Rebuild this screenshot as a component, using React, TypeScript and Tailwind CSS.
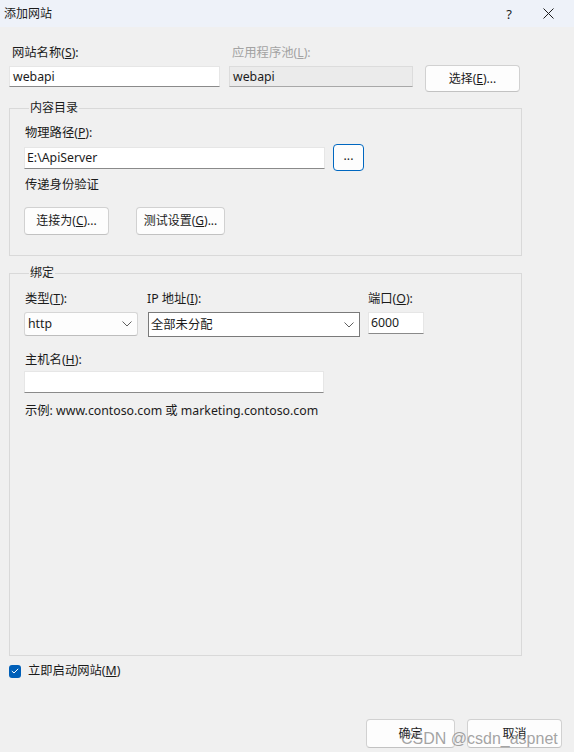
import React from "react";

const font = { fontFamily: '"Noto Sans", "Noto Sans CJK SC", sans-serif' };

function Chevron() {
  return (
    <svg width="10" height="6" viewBox="0 0 10 6" fill="none">
      <path d="M0.5 0.5 L5 5 L9.5 0.5" stroke="#5f5f5f" strokeWidth="1" />
    </svg>
  );
}

function Btn({ children, className = "" }: { children: React.ReactNode; className?: string }) {
  return (
    <div
      className={`flex items-center justify-center rounded-[4px] border border-[#d1d1d1] border-b-[#c2c2c2] bg-[#fdfdfd] text-[12px] text-[#1b1b1b] ${className}`}
    >
      {children}
    </div>
  );
}

export default function App() {
  return (
    <div className="relative h-[752px] w-[574px] overflow-hidden bg-[#f0f0f0] text-[12.3px] leading-[16px] text-[#1b1b1b]" style={font}>
      {/* title bar */}
      <div className="flex h-[27px] items-center bg-[#eef2f9]">
        <span className="ml-[4px] text-[12px]">添加网站</span>
        <span className="ml-auto mr-[31px] text-[13px]">?</span>
        <svg className="mr-[20px]" width="11" height="11" viewBox="0 0 11 11">
          <path d="M0.5 0.5 L10.5 10.5 M10.5 0.5 L0.5 10.5" stroke="#1b1b1b" strokeWidth="1" />
        </svg>
      </div>

      <div className="px-[9px]">
        {/* site name / app pool */}
        <div className="mt-[18px] flex items-start">
          <div className="w-[211px]">
            <div className="pl-[3px]">
              网站名称(<u>S</u>):
            </div>
            <div className="mt-[5px] flex h-[21px] items-center border border-[#e6e6e6] border-b-[#8a8a8a] bg-white pl-[3px]">
              webapi
            </div>
          </div>
          <div className="ml-[9px] w-[184px]">
            <div className="pl-[3px] text-[#a3a3a3]">
              应用程序池(<u>L</u>):
            </div>
            <div className="mt-[5px] flex h-[21px] items-center border border-[#dcdcdc] border-b-[#a8a8a8] bg-[#ebebeb] pl-[3px]">
              webapi
            </div>
          </div>
          <Btn className="ml-[12px] mt-[20px] h-[27px] w-[95px]">
            选择(<u>E</u>)...
          </Btn>
        </div>

        {/* content directory */}
        <fieldset className="mt-[8px] w-[513px] border border-[#d9d9d9] pb-[20px] pl-[14px]">
          <legend className="ml-[5px] px-[1px] text-[12px]">内容目录</legend>
          <div className="mt-[9px] pl-[1px]">
            物理路径(<u>P</u>):
          </div>
          <div className="mt-[3px] flex items-center">
            <div className="flex h-[22px] w-[301px] items-center border border-[#e6e6e6] border-b-[#8a8a8a] bg-white pl-[2px]">
              E:\ApiServer
            </div>
            <div className="ml-[8px] flex h-[27px] w-[31px] items-center justify-center rounded-[4px] border border-[#0067c0] bg-[#fdfdfd] pb-[4px]">
              ...
            </div>
          </div>
          <div className="mt-[6px] pl-[1px]">传递身份验证</div>
          <div className="mt-[14px] flex gap-[27px]">
            <Btn className="h-[28px] w-[85px]">
              连接为(<u>C</u>)...
            </Btn>
            <Btn className="h-[28px] w-[89px]">
              测试设置(<u>G</u>)...
            </Btn>
          </div>
        </fieldset>

        {/* bindings */}
        <fieldset className="mt-[9px] h-[391px] w-[513px] border border-[#d9d9d9] pl-[14px]">
          <legend className="ml-[5px] px-[1px] text-[12px]">绑定</legend>
          <div className="mt-[10px] flex items-start">
            <div className="w-[114px]">
              <div className="pl-[1px]">
                类型(<u>T</u>):
              </div>
              <div className="mt-[5px] flex h-[24px] items-center justify-between rounded-[3px] border border-[#d6d6d6] border-b-[#bdbdbd] bg-[#fdfdfd] pl-[3px] pr-[5px]">
                <span>http</span>
                <Chevron />
              </div>
            </div>
            <div className="ml-[10px] w-[212px]">
              <div className="-ml-[1px]">
                IP 地址(<u>I</u>):
              </div>
              <div className="mt-[5px] flex h-[25px] items-center justify-between border border-[#7a7a7a] bg-white pl-[2px] pr-[5px]">
                <span>全部未分配</span>
                <Chevron />
              </div>
            </div>
            <div className="ml-[8px] w-[56px]">
              <div>
                端口(<u>O</u>):
              </div>
              <div className="mt-[5px] flex h-[22px] items-center border border-[#e6e6e6] border-b-[#8a8a8a] bg-white pl-[2px]">
                6000
              </div>
            </div>
          </div>
          <div className="mt-[15px] pl-[1px]">
            主机名(<u>H</u>):
          </div>
          <div className="mt-[3px] h-[22px] w-[300px] border border-[#e6e6e6] border-b-[#8a8a8a] bg-white" />
          <div className="mt-[10px] pl-[1px]">示例: www.contoso.com 或 marketing.contoso.com</div>
        </fieldset>

        {/* start now */}
        <div className="mt-[7px] flex items-center">
          <div className="flex h-[13px] w-[12px] items-center justify-center rounded-[3px] bg-[#005fb8]">
            <svg width="8" height="6" viewBox="0 0 8 6" fill="none">
              <path d="M0.8 3 L3 5 L7.2 0.8" stroke="white" strokeWidth="1" />
            </svg>
          </div>
          <span className="ml-[7px]">
            立即启动网站(<u>M</u>)
          </span>
        </div>
      </div>

      {/* footer buttons */}
      <div className="mt-[40px] flex justify-end gap-[12px] pr-[12px]">
        <Btn className="h-[29px] w-[89px]">确定</Btn>
        <Btn className="h-[29px] w-[95px]">取消</Btn>
      </div>

      <div
        className="pointer-events-none absolute left-[401px] top-[729px] text-[16px] leading-[20px] text-[#8c8c8c]/80"
        style={{ fontFamily: '"Liberation Sans", Arial, sans-serif' }}
      >
        CSDN @csdn_aspnet
      </div>
    </div>
  );
}
